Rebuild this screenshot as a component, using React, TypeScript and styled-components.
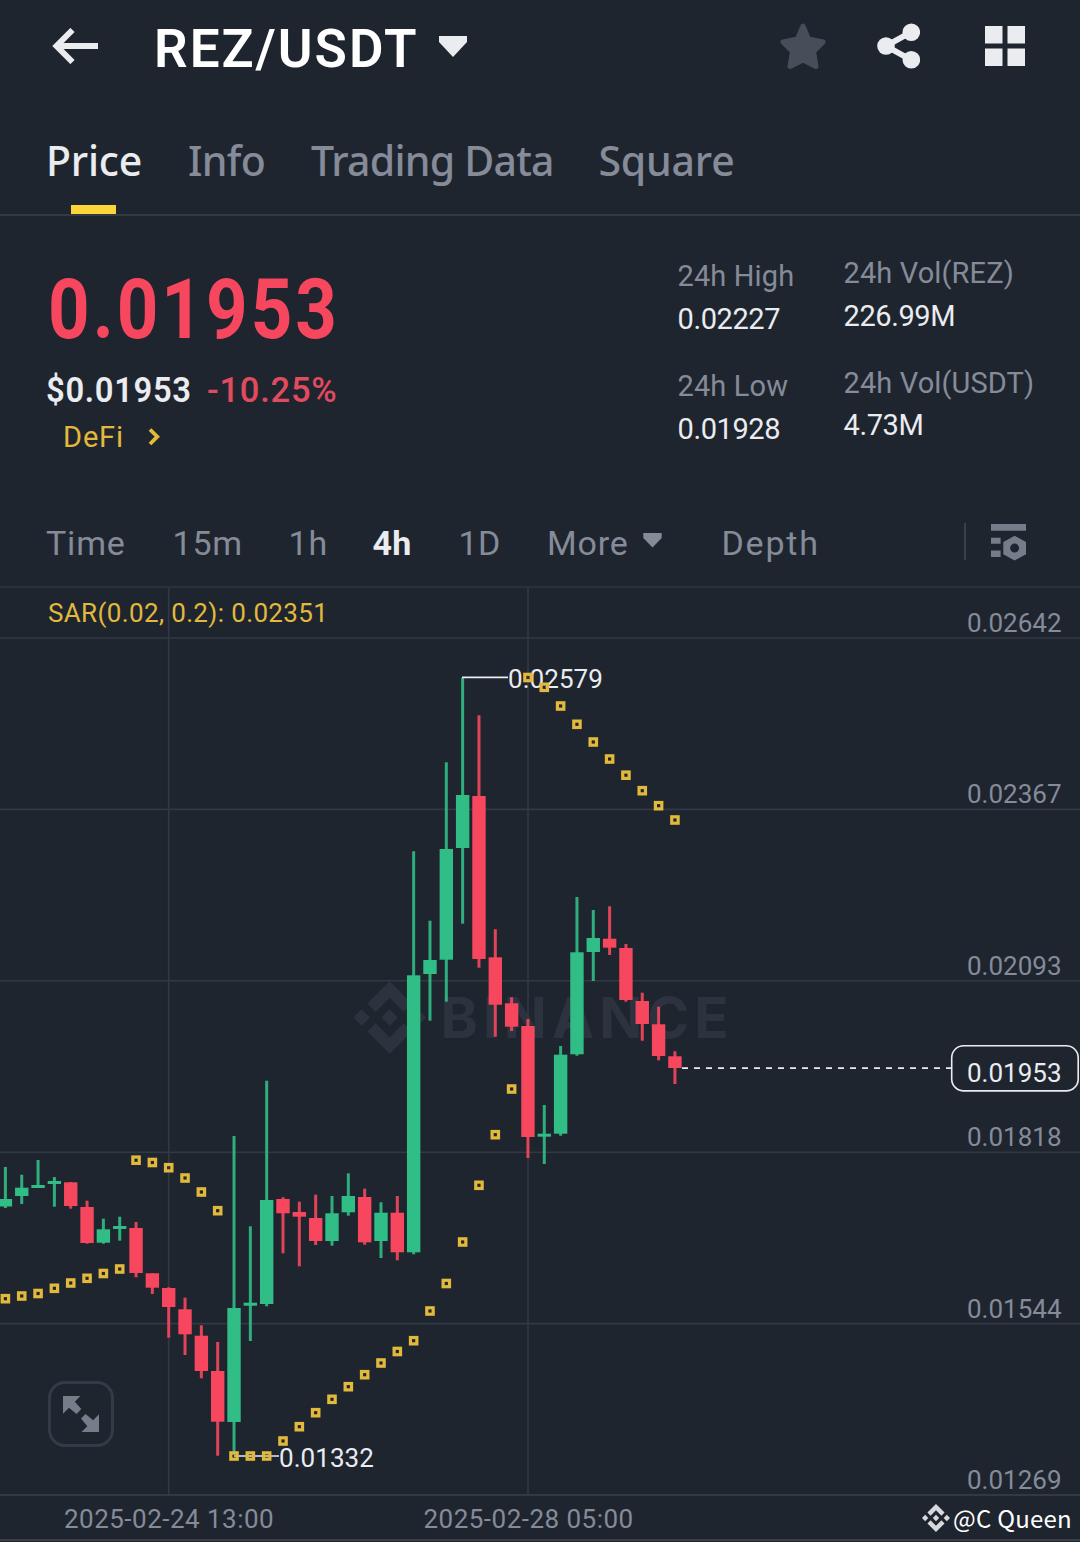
import React from "react";
import styled, { createGlobalStyle } from "styled-components";

const color = {
  bg: "#1f252f",
  line: "#333943",
  muted: "#858b98",
  text: "#eaecef",
  green: "#30bd86",
  red: "#f6475e",
  gold: "#e2b93b",
  accent: "#fbd43a",
};

const UI = `Roboto, "Liberation Sans", sans-serif`;
const TAB = `"Noto Sans", "Liberation Sans", sans-serif`;
const SIGN = `"Noto Sans CJK SC", "Noto Sans", sans-serif`;

const GlobalStyle = createGlobalStyle`
  body { margin: 0; background: ${color.bg}; }
  svg { display: block; flex: none; }
`;

const Screen = styled.main`
  width: 1080px;
  height: 1542px;
  overflow: hidden;
  display: flex;
  flex-direction: column;
  background: ${color.bg};
  color: ${color.text};
  font-family: ${UI};
  white-space: nowrap;
`;

/* Header */
const Header = styled.header`
  box-sizing: border-box;
  height: 92px;
  padding: 0 55px 0 52px;
  display: flex;
  align-items: center;
`;
const Pair = styled.h1`
  margin: 0 0 0 56px;
  padding-top: 6px;
  width: 285px;
  font-size: 53px;
  line-height: 60px;
  font-weight: 600;
  letter-spacing: 2px;
  color: #fff;
`;
const Actions = styled.div`
  margin-left: auto;
  display: flex;
  align-items: center;
`;
const Action = styled.span<{ $gap?: number }>`
  margin-left: ${(p) => p.$gap ?? 0}px;
`;

/* Tabs */
const Tabs = styled.nav`
  box-sizing: border-box;
  height: 124px;
  padding: 14px 0 0 46px;
  display: flex;
  border-bottom: 2px solid ${color.line};
`;
const Tab = styled.a<{ $width: number; $active?: boolean; $spacing: number }>`
  position: relative;
  width: ${(p) => p.$width}px;
  height: 108px;
  font: 500 41px/108px ${TAB};
  letter-spacing: ${(p) => p.$spacing}px;
  color: ${(p) => (p.$active ? color.text : color.muted)};
  &::after {
    content: "";
    display: ${(p) => (p.$active ? "block" : "none")};
    position: absolute;
    left: 25px;
    bottom: 0;
    width: 45px;
    height: 9px;
    background: ${color.accent};
  }
`;

/* Summary */
const Summary = styled.section`
  box-sizing: border-box;
  height: 282px;
  display: flex;
  padding-left: 46px;
`;
const Quote = styled.div`
  width: 631.5px;
  padding-top: 54px;
`;
const LastPrice = styled.div`
  width: 330px;
  margin-left: 1.5px;
  font-size: 82.5px;
  line-height: 80px;
  font-weight: 700;
  letter-spacing: 3.4px;
  color: ${color.red};
  transform: scaleX(0.88);
  transform-origin: left;
`;
const FiatRow = styled.div`
  margin-top: 20px;
  display: flex;
  font-size: 34.5px;
  line-height: 40px;
`;
const Fiat = styled.span`
  width: 161px;
  font-weight: 600;
  letter-spacing: 0.7px;
  transform: scaleX(0.95);
  transform-origin: left;
`;
const Change = styled.span`
  font-weight: 500;
  letter-spacing: 0.75px;
  color: #e04b5e;
`;
const Category = styled.a`
  margin-top: 12px;
  padding-left: 17px;
  display: flex;
  align-items: center;
  font-size: 29px;
  line-height: 30px;
  letter-spacing: 0.85px;
  color: ${color.gold};
`;
const CategoryName = styled.span`
  width: 85px;
`;
const StatColumn = styled.dl<{ $width: number; $top: number; $gap: number }>`
  margin: 0;
  width: ${(p) => p.$width}px;
  padding-top: ${(p) => p.$top}px;
  display: flex;
  flex-direction: column;
  gap: 37px;
  font-size: 29px;
  line-height: 30px;
  dt { color: ${color.muted}; letter-spacing: 0.12px; margin-bottom: ${(p) => p.$gap}px; }
  dd { margin: 0; letter-spacing: -0.4px; }
`;

/* Interval toolbar */
const Intervals = styled.div`
  box-sizing: border-box;
  height: 90px;
  padding: 0 54px 0 46px;
  display: flex;
  align-items: center;
  border-bottom: 2px solid #2b313c;
  font-size: 34px;
  line-height: 40px;
`;
const Interval = styled.a<{ $width: number; $active?: boolean; $spacing?: number }>`
  width: ${(p) => p.$width}px;
  padding-top: 2px;
  display: flex;
  color: ${(p) => (p.$active ? color.text : color.muted)};
  font-weight: ${(p) => (p.$active ? 700 : 400)};
  letter-spacing: ${(p) => p.$spacing ?? 0.8}px;
`;
const MoreLabel = styled.span`
  width: 95.5px;
`;
const CaretBox = styled.span`
  padding-top: 10px;
`;
const Divider = styled.i`
  margin-left: auto;
  margin-bottom: 2px;
  margin-right: 25px;
  width: 2px;
  height: 37px;
  background: #3a404b;
`;

/* Chart */
const ChartArea = styled.section`
  position: relative;
  height: 906px;
  font-size: 26px;
`;
const Expand = styled.button`
  position: absolute;
  left: 48px;
  top: 793px;
  box-sizing: border-box;
  width: 66px;
  height: 66px;
  padding: 0;
  border: 3px solid #353b46;
  border-radius: 17px;
  background: ${color.bg};
  display: flex;
  align-items: center;
  justify-content: center;
`;
const TimeAxis = styled.footer`
  box-sizing: border-box;
  height: 47px;
  padding-left: 64px;
  border-top: 2px solid ${color.line};
  border-bottom: 2px solid #3a3f4c;
  display: flex;
  font-size: 26px;
  line-height: 46px;
  letter-spacing: 0.48px;
  color: ${color.muted};
`;
const Stamp = styled.time`
  width: 359.5px;
`;
const Signature = styled.div`
  margin-left: 139px;
  display: flex;
  align-items: center;
  gap: 3px;
  font: 400 24px/43px ${SIGN};
  letter-spacing: 0.25px;
  color: #fff;
`;

const BINANCE =
  "M16.624 13.9202l2.7175 2.7154-7.353 7.353-7.353-7.352 2.7175-2.7164 4.6355 4.6595 4.6356-4.6595zm4.6366-4.6366L24 12l-2.7154 2.7164L18.5682 12l2.6924-2.7164zm-9.272.001l2.7163 2.6914-2.7164 2.7174v-.001L9.2721 12l2.7164-2.7154zm-9.2722-.001L5.4088 12l-2.6914 2.6924L0 12l2.7164-2.7164zM11.9885.0115l7.353 7.329-2.7174 2.7154-4.6356-4.6356-4.6355 4.6595-2.7174-2.7154 7.353-7.353z";

/* Candle: up/down, body top, body bottom, wick top, wick bottom, SAR level */
type Candle = [0 | 1, number, number, number, number, number];
const candles: Candle[] = [
  [1, 1199, 1206.5, 1167, 1208, 1298.7],
  [1, 1187.7, 1196, 1174.7, 1204, 1296],
  [1, 1185, 1188, 1160, 1188, 1293.5],
  [1, 1181, 1184, 1177, 1206.7, 1288.3],
  [0, 1182.3, 1206, 1182, 1208.7, 1283],
  [0, 1207, 1243, 1200.7, 1243.7, 1278.3],
  [1, 1229.3, 1242.7, 1218.7, 1243.7, 1273.5],
  [1, 1226, 1229, 1216.7, 1240.7, 1269],
  [0, 1228, 1273, 1222, 1277.3, 1160.2],
  [0, 1273.3, 1287.7, 1273.3, 1294, 1162.5],
  [0, 1288, 1307, 1287.3, 1337.7, 1167.7],
  [0, 1309.3, 1334.3, 1297.7, 1355, 1178],
  [0, 1335.7, 1371, 1325.3, 1378.3, 1192],
  [0, 1371, 1421.7, 1342, 1455.7, 1210.7],
  [1, 1308, 1422, 1136, 1455, 1456],
  [1, 1302.7, 1305.7, 1226.3, 1341, 1456],
  [1, 1200, 1304, 1080.7, 1306.3, 1456],
  [0, 1199, 1213.3, 1197.3, 1253.3, 1441],
  [0, 1212, 1216.7, 1201.7, 1266.3, 1426.7],
  [0, 1218, 1241, 1194.7, 1245, 1412.7],
  [1, 1213.3, 1241, 1196, 1245.7, 1399.3],
  [1, 1196, 1212.3, 1173.3, 1215.7, 1386.7],
  [0, 1197, 1242.3, 1188.7, 1244.7, 1374.7],
  [1, 1212.7, 1241, 1202.3, 1258, 1363],
  [0, 1212.7, 1252.3, 1196, 1260.3, 1351.5],
  [1, 975.3, 1252.3, 851.3, 1254.3, 1340.7],
  [1, 960, 974, 920.7, 1020.7, 1311],
  [1, 849, 959.7, 762.3, 1001.7, 1283.5],
  [1, 795, 848, 677.7, 923.7, 1242],
  [0, 796, 959, 715.3, 967.7, 1185.3],
  [0, 957.3, 1004.7, 929.3, 1036.7, 1134.7],
  [0, 1003.3, 1026.7, 997.3, 1031, 1089],
  [0, 1026, 1137, 1019, 1158, 677.5],
  [1, 1133.7, 1136.7, 1105, 1164, 687.3],
  [1, 1054.7, 1133.7, 1046, 1135.7, 706],
  [1, 952.3, 1054.3, 897, 1055.7, 724.3],
  [1, 938, 952, 910, 981, 742],
  [0, 938.7, 947.7, 906.3, 955, 759],
  [0, 948, 1000, 944, 1001.7, 775.2],
  [0, 1001, 1024, 992.7, 1040.7, 790.7],
  [0, 1024.3, 1056, 1006.7, 1060.3, 805.7],
  [0, 1056.3, 1068, 1051.3, 1084, 820],
];

const levels: [string, number][] = [
  ["0.02642", 638],
  ["0.02367", 809.4],
  ["0.02093", 980.8],
  ["0.01818", 1152.2],
  ["0.01544", 1323.6],
  ["0.01269", 1495],
];
const candleX = (i: number) => 5.4 + i * 16.33;

function Chart() {
  return (
    <svg width="1080" height="906" viewBox="0 588 1080 906" fontFamily={UI} fontSize="26">
      <g fill="#2d333e">
        <path d={BINANCE} transform="translate(353.5 981.3) scale(3.02)" />
        <text x="440.5" y="1038" fontFamily="Inter, sans-serif" fontWeight="700" fontSize="56.5" textLength="288">
          BINANCE
        </text>
      </g>
      <g stroke={color.line} strokeWidth="1.6">
        {levels.map(([label, y]) => (
          <line key={label} x1="0" x2="1080" y1={y} y2={y} />
        ))}
        <line x1="168.7" x2="168.7" y1="588" y2="1495" />
        <line x1="528" x2="528" y1="588" y2="1495" />
      </g>
      <g fill={color.muted}>
        {levels.map(([label, y]) => (
          <text key={label} x="967" y={y - 6}>{label}</text>
        ))}
      </g>
      <text x="48" y="621.5" fill={color.gold} letterSpacing="0.36">SAR(0.02, 0.2): 0.02351</text>
      {candles.map(([up, top, bottom, high, low], i) => (
        <g key={i} fill={up ? color.green : color.red}>
          <rect x={candleX(i) - 1.5} y={high} width="3" height={low - high} opacity="0.9" />
          <rect x={candleX(i) - 6.7} y={top} width="13.4" height={bottom - top} />
        </g>
      ))}
      <g stroke={color.text} strokeWidth="1.7">
        <line x1="462" x2="508" y1="677.4" y2="677.4" />
        <line x1="234" x2="279" y1="1456" y2="1456" />
        <line x1="682" x2="951" y1="1068.2" y2="1068.2" strokeDasharray="6 6" />
      </g>
      <g fill={color.text} letterSpacing="0.05">
        <text x="508" y="687.8">0.02579</text>
        <text x="279" y="1466.8">0.01332</text>
      </g>
      <g fill="none" stroke={color.gold} strokeWidth="3.2">
        {candles.map((c, i) => (
          <rect key={i} x={candleX(i) - 3.2} y={c[5] - 3.2} width="6.4" height="6.4" />
        ))}
      </g>
      <rect x="951.7" y="1045.7" width="126.5" height="45.2" rx="12" fill={color.bg} stroke={color.text} strokeWidth="1.6" />
      <text x="967" y="1082" fill={color.text}>0.01953</text>
    </svg>
  );
}

export default function App() {
  return (
    <Screen>
      <GlobalStyle />
      <Header>
        <svg width="46" height="36" viewBox="0 0 46 36" fill="none" stroke={color.text} strokeWidth="6">
          <path d="M20.5 2L4.5 18L20.5 34M4.5 18H46" />
        </svg>
        <Pair>REZ/USDT</Pair>
        <svg width="28" height="22" viewBox="0 0 28 22" fill={color.text}>
          <path d="M0 1H28V7L14 22L0 7Z" />
        </svg>
        <Actions>
          <Action>
            <svg width="46" height="48" viewBox="0 0 46 48" fill="#474d59" stroke="#474d59" strokeWidth="5" strokeLinejoin="round">
              <path d="M23 4L28.5 17L43 20L33.5 29.5L36 44.5L23 38L10 44.5L12.5 29.5L3 20L17.5 17Z" />
            </svg>
          </Action>
          <Action $gap={51}>
            <svg width="43" height="46" viewBox="0 0 43 46" fill={color.text}>
              <path d="M34.3 9L9 23L34.3 37" fill="none" stroke={color.text} strokeWidth="6" />
              <circle cx="9" cy="23" r="8.8" />
              <circle cx="34.3" cy="9.2" r="8.8" />
              <circle cx="34.3" cy="36.8" r="8.8" />
            </svg>
          </Action>
          <Action $gap={65}>
            <svg width="40" height="40" viewBox="0 0 40 40" fill={color.text}>
              <path d="M0 0H17.5V17.5H0ZM22.5 0H40V17.5H22.5ZM0 22.5H17.5V40H0ZM22.5 22.5H40V40H22.5Z" />
            </svg>
          </Action>
        </Actions>
      </Header>

      <Tabs>
        <Tab $width={142} $spacing={-0.2} $active>Price</Tab>
        <Tab $width={123} $spacing={-0.7}>Info</Tab>
        <Tab $width={287.5} $spacing={-0.75}>Trading Data</Tab>
        <Tab $width={140} $spacing={-0.2}>Square</Tab>
      </Tabs>

      <Summary>
        <Quote>
          <LastPrice>0.01953</LastPrice>
          <FiatRow>
            <Fiat>$0.01953</Fiat>
            <Change>-10.25%</Change>
          </FiatRow>
          <Category>
            <CategoryName>DeFi</CategoryName>
            <svg width="13" height="18" viewBox="0 0 13 18" fill="none" stroke={color.gold} strokeWidth="3.8">
              <path d="M2 1.5L9.3 8.7L2 16" />
            </svg>
          </Category>
        </Quote>
        <StatColumn $width={166} $top={45} $gap={13}>
          <div><dt>24h High</dt><dd>0.02227</dd></div>
          <div><dt>24h Low</dt><dd>0.01928</dd></div>
        </StatColumn>
        <StatColumn $width={200} $top={42} $gap={12.5}>
          <div><dt>24h Vol(REZ)</dt><dd>226.99M</dd></div>
          <div><dt>24h Vol(USDT)</dt><dd>4.73M</dd></div>
        </StatColumn>
      </Summary>

      <Intervals>
        <Interval $width={126.5}>Time</Interval>
        <Interval $width={116}>15m</Interval>
        <Interval $width={84}>1h</Interval>
        <Interval $width={86} $spacing={0.3} $active>4h</Interval>
        <Interval $width={88.5} $spacing={0.4}>1D</Interval>
        <Interval $width={174.5}>
          <MoreLabel>More</MoreLabel>
          <CaretBox>
            <svg width="19" height="15" viewBox="0 0 19 15" fill={color.muted}>
              <path d="M0.3 0H18.7V5L9.5 14.5L0.3 5Z" />
            </svg>
          </CaretBox>
        </Interval>
        <Interval $width={110} $spacing={1.8}>Depth</Interval>
        <Divider />
        <svg width="35" height="37" viewBox="0 0 35 37" fill="#767c89">
          <path d="M0 0H35V6.7H0ZM0 13.7H9.6V19.7H0ZM0 26.4H9.6V33H0Z" />
          <path
            fillRule="evenodd"
            d="M23.6 11.8L35 18V30.2L23.6 36.4L12.3 30.2V18ZM23.6 19.6a4.5 4.5 0 1 0 0 9a4.5 4.5 0 1 0 0-9Z"
          />
        </svg>
      </Intervals>

      <ChartArea>
        <Chart />
        <Expand aria-label="Expand chart">
          <svg width="36" height="36" viewBox="0 0 36 36" fill="#767c89">
            <path d="M0 0H17.3L11.8 5.7L18.3 13L13.5 18L6 11.7L0 17.7ZM36 36H18.5L24.3 30.3L18 22.5L22.5 18L30.2 24.3L36 18.3Z" />
          </svg>
        </Expand>
      </ChartArea>

      <TimeAxis>
        <Stamp>2025-02-24 13:00</Stamp>
        <Stamp>2025-02-28 05:00</Stamp>
        <Signature>
          <svg width="28" height="28" viewBox="0 0 24 24" fill="#d7d9dc">
            <path d={BINANCE} />
          </svg>
          @C Queen
        </Signature>
      </TimeAxis>
    </Screen>
  );
}
